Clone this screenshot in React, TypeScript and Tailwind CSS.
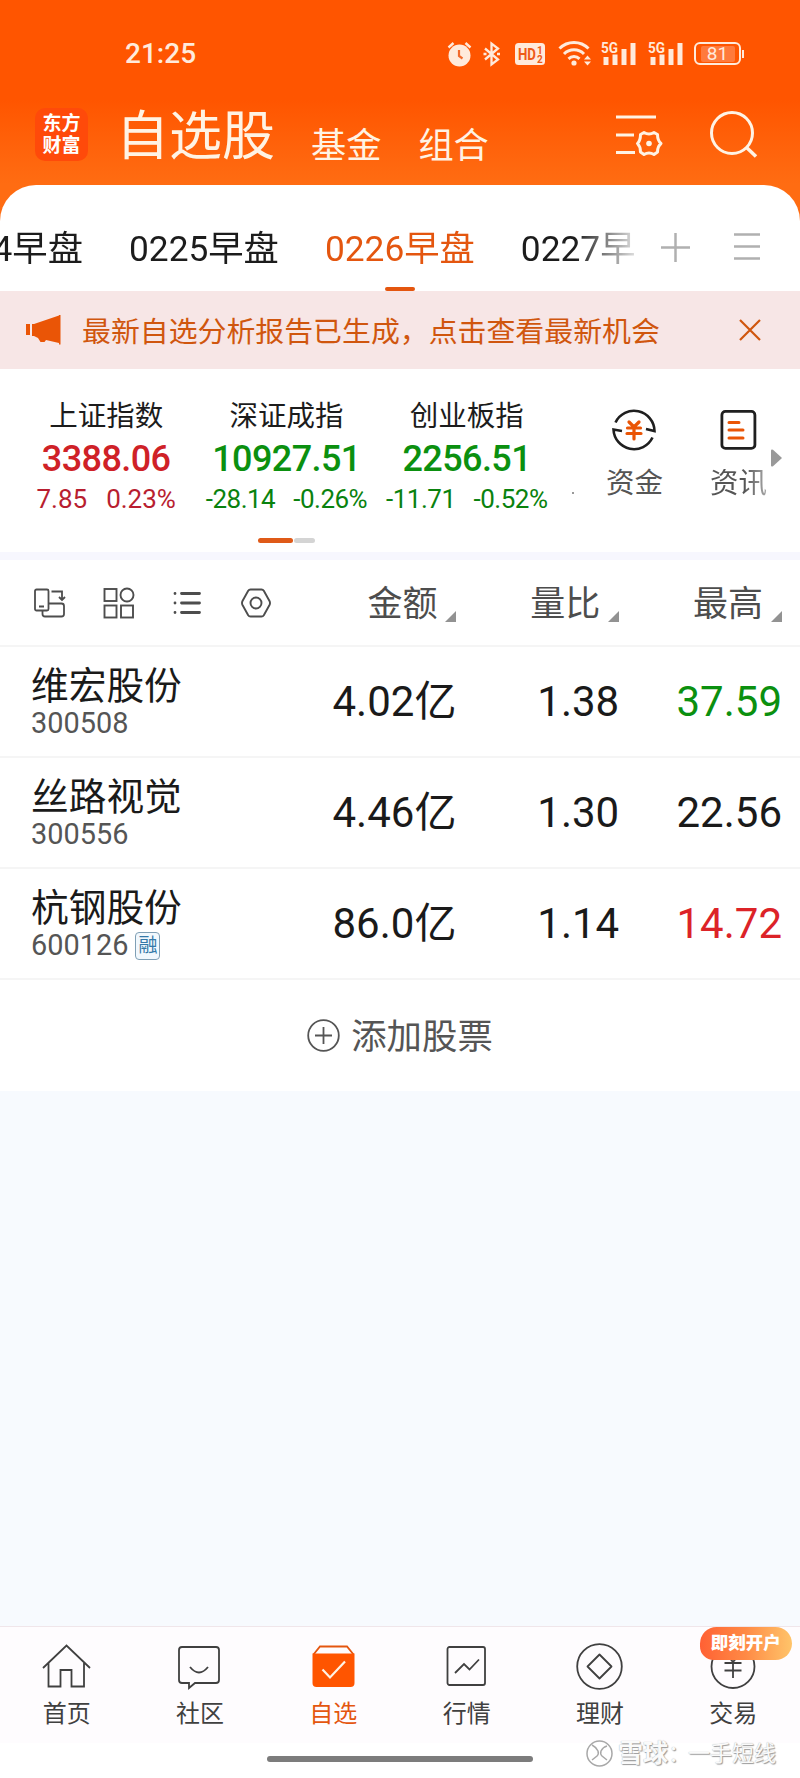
import { useState } from 'react';
import type { ReactNode } from 'react';

const tabs = ['0224早盘', '0225早盘', '0226早盘', '0227早盘'];

const indices = [
  { name: '上证指数', value: '3388.06', change: '7.85', percent: '0.23%', up: true },
  { name: '深证成指', value: '10927.51', change: '-28.14', percent: '-0.26%', up: false },
  { name: '创业板指', value: '2256.51', change: '-11.71', percent: '-0.52%', up: false },
];

const stocks = [
  { name: '维宏股份', code: '300508', amount: '4.02亿', ratio: '1.38', high: '37.59', color: 'text-[#0b900f]', margin: false },
  { name: '丝路视觉', code: '300556', amount: '4.46亿', ratio: '1.30', high: '22.56', color: 'text-[#1a1a1a]', margin: false },
  { name: '杭钢股份', code: '600126', amount: '86.0亿', ratio: '1.14', high: '14.72', color: 'text-[#dc2328]', margin: true },
];

function Signal() {
  return (
    <svg className="-mt-[5px]" width="35" height="30" viewBox="0 -5 35 30" fill="currentColor">
      <text x="0" y="11.5" fontSize="15" fontWeight="700" textLength="17" lengthAdjust="spacingAndGlyphs">5G</text>
      <rect x="2.5" y="16" width="5" height="8" />
      <rect x="11.5" y="13.5" width="5" height="10.5" />
      <rect x="20.5" y="8" width="5" height="16" />
      <rect x="29.5" y="2" width="5" height="22" />
    </svg>
  );
}

function StatusBar() {
  return (
    <div className="flex h-[98px] items-center pl-[125px] pt-[9px] text-[#ffeadb]">
      <span className="text-[28px] font-medium leading-none">21:25</span>
      <div className="ml-[251px] flex items-center">
        <svg width="25" height="26" viewBox="0 0 25 26" fill="none" stroke="currentColor">
          <circle cx="12.5" cy="14.5" r="11" fill="currentColor" stroke="none" />
          <path d="M1.5 6.5 6.5 2M23.5 6.5 18.5 2" strokeWidth="2.4" />
          <path d="M12 9v6l3.5 2.5" stroke="#f26a2c" strokeWidth="2.2" />
        </svg>
        <svg className="ml-[11px]" width="18" height="26" viewBox="0 0 18 26" fill="none" stroke="currentColor" strokeWidth="2.3">
          <path d="M2 7.5 15 18.5 8.5 23.5V2.5L15 7.5 2 18.5" />
          <path d="M.5 13h3M14 13h3" strokeWidth="2.5" />
        </svg>
        <svg className="ml-[14px]" width="30" height="22" viewBox="0 0 30 22">
          <rect width="30" height="22" rx="3.5" fill="currentColor" />
          <text x="3" y="17" fontSize="16" fontWeight="700" fill="#ee5a18" textLength="18" lengthAdjust="spacingAndGlyphs">HD</text>
          <text x="22" y="10.5" fontSize="10" fontWeight="700" fill="#ee5a18">1</text>
          <text x="22" y="20" fontSize="10" fontWeight="700" fill="#ee5a18">2</text>
        </svg>
        <svg className="ml-[13px]" width="34" height="27" viewBox="0 0 34 27" fill="none" stroke="currentColor" strokeWidth="3">
          <path d="M1.5 8.5a20.5 20.5 0 0 1 29 0M6 14a14 14 0 0 1 20 0M10.500 18.800a8 8 0 0 1 11 0" />
          <circle cx="16" cy="23" r="2.6" fill="currentColor" stroke="none" />
          <path d="m26 19.500 3.500-4 3.500 4zM26 21.500l3.500 4 3.500-4z" fill="currentColor" stroke="none" />
        </svg>
        <div className="ml-[9px]"><Signal /></div>
        <div className="ml-[12px]"><Signal /></div>
        <div className="ml-[11px] flex h-[23px] w-[47px] items-center justify-center rounded-[6px] border-2 border-current">
          <div className="flex h-[16px] w-[34px] items-center justify-center rounded-[2px] bg-[#ff7a3c] text-[19px] leading-none">81</div>
        </div>
        <div className="ml-[1px] h-[8px] w-[2px] bg-current" />
      </div>
    </div>
  );
}

function TopNav() {
  return (
    <div className="flex h-[87px] pl-[35px] text-[#fff3e4]">
      <div className="mt-[10px] flex h-[53px] w-[53px] flex-col items-center justify-center gap-[2px] rounded-[10px] bg-[#ff4a0a] text-[19px] font-bold leading-[20px] text-white">
        <span>东方</span>
        <span>财富</span>
      </div>
      <span className="ml-[28px] mt-[13px] text-[53px] leading-[52px]">自选股</span>
      <span className="ml-[36px] mt-[30px] text-[35.200px] leading-[36px]">基金</span>
      <span className="ml-[37px] mt-[30px] text-[35.200px] leading-[36px]">组合</span>
      <svg className="ml-[127px] mt-[15px]" width="48" height="44" viewBox="0 0 48 44" fill="none" stroke="currentColor" strokeWidth="3">
        <path d="M0 4h40M0 22h18M0 39.500h19" />
        <path d="M28 19.500Q33 22.500 38 19.500L41.500 21.500Q41.500 27.500 45 30.500Q41.500 33.500 41.500 39L38 41.500Q33 38.500 28 41.500L24.500 39Q24.500 33.500 21.500 30.500Q24.500 27.500 24.500 21.500z" strokeLinejoin="round" />
        <circle cx="33" cy="30.500" r="2.800" fill="currentColor" stroke="none" />
      </svg>
      <svg className="ml-[46px] mt-[12px]" width="48" height="48" viewBox="0 0 48 48" fill="none" stroke="currentColor" strokeWidth="3">
        <circle cx="22" cy="23" r="20.500" />
        <path d="m36 37 10 9.500" strokeWidth="3.500" />
      </svg>
    </div>
  );
}

function GroupTabs() {
  const [active, setActive] = useState(2);

  return (
    <div className="flex h-[106px] overflow-hidden rounded-t-[36px] bg-white">
      <div className="flex w-[634px] overflow-hidden mask-r-from-[575px] mask-r-to-[645px]">
        <div className="-ml-[67px] flex gap-[46px]">
          {tabs.map((tab, i) => (
            <button
              key={tab}
              onClick={() => setActive(i)}
              className={`flex shrink-0 flex-col items-center justify-between pt-[44px] text-[35.300px] leading-[40px] ${i === active ? 'text-[#e4560f]' : 'text-[#1c1c1c]'}`}
            >
              {tab}
              <span className={`h-[4px] w-[30px] rounded-full ${i === active ? 'bg-[#e4560f]' : ''}`} />
            </button>
          ))}
        </div>
      </div>
      <svg className="ml-[27px] mt-[48px]" width="29" height="29" viewBox="0 0 29 29" stroke="#b0b0b0" strokeWidth="2.500">
        <path d="M0 14.500h29M14.500 0v29" />
      </svg>
      <svg className="ml-[44px] mt-[47px]" width="26" height="29" viewBox="0 0 26 29" stroke="#b0b0b0" strokeWidth="2.500">
        <path d="M0 2.500h26M0 14.500h26M0 26.500h26" />
      </svg>
    </div>
  );
}

function Notice() {
  return (
    <div className="flex h-[78px] items-center bg-[#f7e6e6] text-[#d0560e]">
      <svg className="ml-[26px]" width="35" height="30" viewBox="0 0 35 30" fill="#ea5506">
        <path d="M0 9h4v11H0zM6 9h2l25-8.500V0h1.500v29.500H33V28l-13-3-1.500 2h-4L12 23l-4-2H6z" />
      </svg>
      <span className="ml-[21px] pt-[4px] text-[28.900px] leading-none">最新自选分析报告已生成，点击查看最新机会</span>
      <svg className="ml-[79px]" width="22" height="22" viewBox="0 0 22 22" stroke="#d0560e" strokeWidth="2.200">
        <path d="m1 1 20 20M21 1 1 21" />
      </svg>
    </div>
  );
}

function Indices() {
  return (
    <div className="h-[183px] bg-white">
      <div className="flex h-[169px]">
        <div className="flex pl-[16px]">
          {indices.map((item) => (
            <div key={item.name} className="flex w-[180.300px] flex-col items-center pt-[33px]">
              <span className="text-[28.500px] leading-[30px] text-[#1c1c1c]">{item.name}</span>
              <span className={`mt-[7px] text-[36px] font-medium leading-[40px] tracking-[-0.600px] ${item.up ? 'text-[#cf2127]' : 'text-[#0b900f]'}`}>{item.value}</span>
              <div className={`mt-[5px] flex text-[26px] leading-[30px] ${item.up ? 'gap-[19px] text-[#b81e30]' : 'gap-[18px] tracking-[-0.500px] text-[#0a820e]'}`}>
                <span>{item.change}</span>
                <span>{item.percent}</span>
              </div>
            </div>
          ))}
        </div>
        <div className="mt-[123px] ml-[15px] h-[2px] w-[2px] bg-[#999]" />
        <div className="ml-[32px] flex flex-col items-center pt-[39px] text-[28.500px] leading-[30px] text-[#555]">
          <svg width="44" height="44" viewBox="0 0 44 44" fill="none" stroke="#1f1f1f" strokeWidth="2.600">
            <path d="M3.500 14.500A20.500 20.500 0 0 1 42.500 23L34 21" />
            <path d="M40.500 29.500A20.500 20.500 0 0 1 1.500 21.500L10 23" />
            <path d="m17 14 5 5 5-5M15.500 20h13M15 25.500h14M22 19v12" stroke="#ea5506" strokeWidth="3.200" strokeLinecap="round" />
          </svg>
          <span className="mt-[17px]">资金</span>
        </div>
        <div className="ml-[47px] flex flex-col items-center pt-[39px] text-[28.500px] leading-[30px] text-[#555]">
          <svg width="44" height="44" viewBox="0 0 44 44" fill="none" stroke="#1f1f1f" strokeWidth="2.800">
            <rect x="5.900" y="3.400" width="33" height="37" rx="3.500" />
            <path d="M13 14.500h10M13 22h14M13 30h14" stroke="#ea5506" strokeWidth="3" strokeLinecap="round" />
          </svg>
          <span className="mt-[17px] bg-gradient-to-r from-[#555] from-60% to-[#aaa] bg-clip-text text-transparent">资讯</span>
        </div>
        <svg className="ml-[4px] mt-[80px]" width="12" height="18" viewBox="0 0 12 18" fill="#999">
          <path d="M0 1.500Q0 0 2 .7L11 9 2 17.300Q0 18 0 16.500z" />
        </svg>
      </div>
      <div className="flex gap-[1px] pl-[258px]">
        <div className="h-[5px] w-[35px] rounded-full bg-[#df5a18]" />
        <div className="h-[5px] w-[21px] rounded-full bg-[#d4d4d4]" />
      </div>
    </div>
  );
}

function SortHeader({ label }: { label: string }) {
  return (
    <button className="flex w-[162.800px] items-end justify-end gap-[8px] text-[35px] leading-[38px]">
      <span className="pt-[4px]">{label}</span>
      <svg className="mb-[2px]" width="11" height="11" viewBox="0 0 11 11" fill="#929292">
        <path d="M11 0v11H0z" />
      </svg>
    </button>
  );
}

function StockTable() {
  return (
    <div className="border-t-8 border-[#f7f7fe] bg-white">
      <div className="flex h-[85px] items-center pr-[18px] text-[#4d4d4d]">
        <svg className="ml-[34px]" width="32" height="30" viewBox="0 0 32 30" fill="none" stroke="currentColor" strokeWidth="1.800">
          <rect x="1" y="1.500" width="13.500" height="21" rx="1.500" />
          <path d="M5 18.500h5M17.500 3.500h10.500v7M25 9l3 3 3-3M8.500 23v3q0 2.500 2.500 2.500h16.500q2.500 0 2.500-2.500v-8q0-2.500-2.500-2.500h-13" />
        </svg>
        <svg className="ml-[37px]" width="32" height="32" viewBox="0 0 32 32" fill="none" stroke="currentColor" strokeWidth="1.900">
          <rect x="1.500" y="2" width="12" height="12" />
          <circle cx="24" cy="8" r="6.500" />
          <rect x="1.500" y="18.500" width="12" height="12" />
          <rect x="18" y="18.500" width="12" height="12" />
        </svg>
        <svg className="ml-[38px]" width="28" height="24" viewBox="0 0 28 24" fill="none" stroke="currentColor" strokeWidth="2.800" strokeLinecap="round">
          <path d="M8.500 2.500h18M8.500 12h18M8.500 21.500h18M2 2.500h.01M2 12h.01M2 21.500h.01" />
        </svg>
        <svg className="ml-[40px]" width="30" height="30" viewBox="0 0 30 30" fill="none" stroke="currentColor" strokeWidth="1.900" strokeLinejoin="round">
          <path d="M9.500 1.500h11q1.500 0 2.300 1.300L28.500 13q1 2 0 4l-5.700 10.200q-.8 1.300-2.300 1.300h-11q-1.500 0-2.300-1.300L1.500 17q-1-2 0-4L7.200 2.800Q8 1.500 9.500 1.500z" />
          <circle cx="15" cy="15" r="5.500" />
        </svg>
        <div className="ml-auto flex">
          <SortHeader label="金额" />
          <SortHeader label="量比" />
          <SortHeader label="最高" />
        </div>
      </div>
      {stocks.map((stock) => (
        <div key={stock.code} className="flex h-[111px] items-center border-t-2 border-[#f5f5f5] pl-[31px] pr-[18px]">
          <div className="flex flex-col pt-[3px]">
            <span className="text-[37.700px] leading-[40px] text-[#1a1a1a]">{stock.name}</span>
            <div className="mt-[1px] flex h-[34px] items-center text-[28.900px] leading-none text-[#555]">
              {stock.code}
              {stock.margin && (
                <span className="ml-[7px] flex h-[28px] w-[25px] items-center justify-center rounded-[4px] border border-[#7f9fb5] bg-[#f1f8fd] text-[19px] text-[#3478a8]">融</span>
              )}
            </div>
          </div>
          <div className="ml-auto flex text-right text-[42px] leading-none text-[#1a1a1a]">
            <span className="w-[162.800px]">{stock.amount}</span>
            <span className="w-[162.800px]">{stock.ratio}</span>
            <span className={`w-[162.800px] ${stock.color}`}>{stock.high}</span>
          </div>
        </div>
      ))}
      <button className="flex h-[113px] w-full items-center justify-center gap-[11px] border-t-2 border-[#f5f5f5] text-[35.400px] leading-none text-[#555]">
        <svg width="33" height="33" viewBox="0 0 33 33" fill="none" stroke="currentColor" strokeWidth="1.800">
          <circle cx="16.500" cy="16.500" r="15.300" />
          <path d="M16.500 8v17M8 16.500h17" />
        </svg>
        <span className="pt-[4px]">添加股票</span>
      </button>
    </div>
  );
}

const navItems: { label: string; icon: ReactNode }[] = [
  {
    label: '首页',
    icon: <path d="M1 24 24.500 1.500 48 24M6.500 19v23.500h12V26h11v16.500h12.500V19" />,
  },
  {
    label: '社区',
    icon: (
      <>
        <path d="M7 3h34q3 0 3 3v30q0 3-3 3H20l-6 5v-5H7q-3 0-3-3V6q0-3 3-3z" />
        <path d="M15 23q9 11 18 0" />
      </>
    ),
  },
  {
    label: '自选',
    icon: (
      <>
        <path d="M4.500 10.500 11 2.500h27l6.500 8" stroke="#e4560f" />
        <path d="M3.500 9.500h42V39q0 4-4 4h-34q-4 0-4-4z" fill="#ff5500" stroke="none" />
        <path d="m13.500 25.500 7.500 8 15-16" stroke="#fff3e4" strokeWidth="2.200" />
      </>
    ),
  },
  {
    label: '行情',
    icon: (
      <>
        <rect x="5.500" y="3" width="37.500" height="38" rx="2" />
        <path d="m13 29 9-9 5.500 5.500L37 15.500" />
      </>
    ),
  },
  {
    label: '理财',
    icon: (
      <>
        <circle cx="24.500" cy="22.500" r="22.300" />
        <path d="m24.500 10.500 12 12-12 12-12-12z" strokeLinejoin="round" />
      </>
    ),
  },
  {
    label: '交易',
    icon: (
      <>
        <circle cx="24" cy="22.500" r="21.500" />
        <path d="m17.500 10 6.500 8L30.500 10M15.500 19h17M15.500 26.500h17M24 18v16" />
      </>
    ),
  },
];

function BottomNav() {
  return (
    <div className="relative h-[152px] border-t border-[#f0e6ea] bg-white">
      <div className="grid h-[116px] grid-cols-6 bg-[#fefcfe]">
        {navItems.map((item) => (
          <div key={item.label} className={`relative flex flex-col items-center pt-[17px] ${item.label === '自选' ? 'text-[#e4560f]' : 'text-[#404040]'}`}>
            <svg width="49" height="45" viewBox="0 0 49 45" fill="none" stroke="currentColor" strokeWidth="1.800" overflow="visible">
              {item.icon}
            </svg>
            <span className="mt-[11px] text-[24px] leading-[28px]">{item.label}</span>
            {item.label === '交易' && (
              <span className="absolute left-[33px] top-0 flex h-[33px] w-[92px] items-center justify-center rounded-[17px] rounded-bl-[14px] bg-gradient-to-r from-[#ff6034] via-[#ff8a45] to-[#ffc46a] text-[17.500px] font-black leading-none text-white">
                即刻开户
              </span>
            )}
          </div>
        ))}
      </div>
      <div className="mx-auto mt-[13px] h-[6px] w-[266px] rounded-full bg-[#7c7c7c]" />
      {/* community watermark over the gesture area */}
      <div className="absolute left-[586px] top-[113px] flex items-center text-[#fafafa] [text-shadow:1px_1px_1px_#999,0_0_1px_#aaa]">
        <svg width="27" height="27" viewBox="0 0 27 27" fill="none" stroke="#a8a8a8" strokeWidth="1.500">
          <circle cx="13.500" cy="13.500" r="12.500" />
          <path d="M6 5q4 2 6 6 1 3-1 5l-5 4M21 6q-4 1-6 5-1 3 1 5l5 4" />
        </svg>
        <span className="ml-[5px] text-[25px] font-bold leading-[26px]">雪球</span>
        <span className="w-[20px] text-[22px] leading-[26px]">：</span>
        <span className="text-[22px] leading-[26px]">一手短线</span>
      </div>
    </div>
  );
}

export default function App() {
  return (
    <div className="flex h-[1778px] w-[800px] flex-col overflow-hidden bg-[#f7fafe] font-['Roboto','Noto_Sans_CJK_SC',sans-serif]">
      <div className="bg-gradient-to-b from-[#ff5500] from-[100px] to-[#ff6c12] to-[184px]">
        <StatusBar />
        <TopNav />
        <GroupTabs />
      </div>
      <Notice />
      <Indices />
      <StockTable />
      <div className="flex-1" />
      <BottomNav />
    </div>
  );
}
